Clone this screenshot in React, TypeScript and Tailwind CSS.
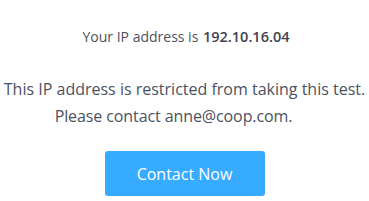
export default function App() {
  return (
    <div
      className="w-[369px] h-[201px] bg-white flex flex-col items-center text-[#4b5260]"
      style={{ fontFamily: '"Open Sans", sans-serif' }}
    >
      <p className="mt-[27px] ml-[3px] text-[14px] leading-[20px]">
        Your IP address is{" "}
        <span className="ml-[1px] text-[14.5px] font-semibold text-[#3d4350]">192.10.16.04</span>
      </p>
      <p className="mt-[32px] text-[16px] leading-[20px] whitespace-nowrap">
        This IP address is restricted from taking this test.
      </p>
      <p className="mt-[7px] mr-[22px] text-[16px] leading-[20px] tracking-[-0.1px]">Please contact anne@coop.com.</p>
      <button className="mt-[25px] w-[160px] h-[45px] rounded-[3px] bg-[#36abff] text-white text-[16px]">
        Contact Now
      </button>
    </div>
  )
}
